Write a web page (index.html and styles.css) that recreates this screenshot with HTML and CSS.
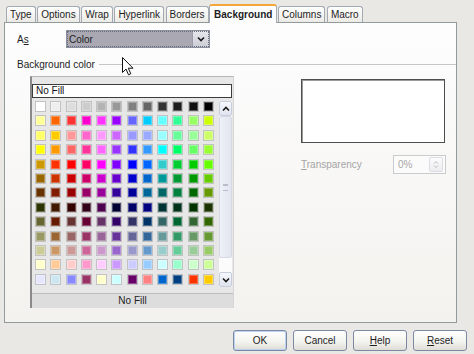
FILE: index.html
```html
<!DOCTYPE html>
<html lang="en">
<head>
    <meta charset="UTF-8">
    <title>Area - Background</title>
    <link rel="stylesheet" href="styles.css">
</head>
<body>
    <div class="tabs">
        <div class="tab">Type</div>
        <div class="tab">Options</div>
        <div class="tab">Wrap</div>
        <div class="tab">Hyperlink</div>
        <div class="tab">Borders</div>
        <div class="tab active">Background</div>
        <div class="tab">Columns</div>
        <div class="tab">Macro</div>
    </div>

    <div class="pane">
        <div class="as-row">
            <label>A<u>s</u></label>
            <div class="select">
                <span class="select-text">Color</span>
                <span class="select-btn">
                    <svg width="8" height="6" viewBox="0 0 8 6"><path d="M1 1.5 L4 4.5 L7 1.5" fill="none" stroke="#1a1a1a" stroke-width="1.6"/></svg>
                </span>
            </div>
        </div>

        <div class="section">
            <span>Background color</span>
            <div class="rule"></div>
        </div>

        <div class="content">
            <!-- colour table with its name field and status line -->
            <div class="colorbox">
                <div class="name-field">No Fill</div>
                <div class="set">
                    <div class="swatches" id="swatches"></div>
                    <div class="scroll">
                        <div class="sb-btn">
                            <svg width="8" height="6" viewBox="0 0 8 6"><path d="M1 4.5 L4 1.5 L7 4.5" fill="none" stroke="#1a1a1a" stroke-width="1.6"/></svg>
                        </div>
                        <div class="sb-thumb"><span class="grip"></span></div>
                        <div class="sb-track"></div>
                        <div class="sb-btn">
                            <svg width="8" height="6" viewBox="0 0 8 6"><path d="M1 1.5 L4 4.5 L7 1.5" fill="none" stroke="#1a1a1a" stroke-width="1.6"/></svg>
                        </div>
                    </div>
                </div>
                <div class="status">No Fill</div>
            </div>

            <div class="side">
                <div class="preview"></div>
                <div class="trans-row">
                    <span class="dim"><u>T</u>ransparency</span>
                    <div class="spin">
                        <span>0%</span>
                        <span class="spin-btn">
                            <svg width="6" height="9" viewBox="0 0 6 9"><path d="M1 3.5 L3 1.5 L5 3.5 M1 5.5 L3 7.5 L5 5.5" fill="none" stroke="#b8b8c0" stroke-width="1"/></svg>
                        </span>
                    </div>
                </div>
            </div>
        </div>
    </div>

    <div class="buttons">
        <div class="btn default">OK</div>
        <div class="btn">Cancel</div>
        <div class="btn"><u>H</u>elp</div>
        <div class="btn"><u>R</u>eset</div>
    </div>

    <!-- mouse pointer -->
    <svg class="cursor" width="13" height="19" viewBox="0 0 13 19">
        <path d="M0.5 0.5 L0.5 15.5 L4 12 L6.5 17.8 L8.8 16.8 L6.3 11.2 L11 11.2 Z" fill="#fff" stroke="#111" stroke-width="1" stroke-linejoin="round"/>
    </svg>

    <script>
        // standard palette, one row per line
        const palette = [
            "#ffffff #eeeeee #dddddd #cccccc #b3b3b3 #999999 #808080 #666666 #333333 #1c1c1c #111111 #000000",
            "#ffff99 #ff6600 #ff3333 #ff00cc #ff33ff #9900ff #6666ff #00ccff #66ffff #33ff99 #99ff66 #ccff00",
            "#ffff66 #ffcc00 #ff9999 #ff66cc #ff99ff #cc66ff #9999ff #99aaff #99ffff #66ff99 #99ff99 #ccff66",
            "#ffff00 #ff9900 #ff6666 #ff3399 #ff66ff #9933ff #3333ff #3399ff #00ffff #00ff66 #66ff66 #99ff33",
            "#cc9900 #ff3300 #ff0000 #ff0066 #ff00ff #8000ff #0000ff #0066ff #33cccc #00cc33 #00cc00 #66ff00",
            "#996600 #cc3300 #cc0000 #cc0066 #cc00cc #6600cc #0000cc #0066cc #009999 #009933 #009900 #66cc00",
            "#663300 #801a00 #990000 #990066 #990099 #330099 #000099 #006699 #006666 #007f3f #006600 #669900",
            "#2b3300 #401a00 #330000 #33001a #4d004d #000033 #000066 #000080 #003333 #00331a #003300 #1a3300",
            "#666633 #661a00 #663333 #660033 #663366 #330066 #333366 #003366 #336666 #006633 #336633 #336600",
            "#999966 #996633 #996666 #993366 #996699 #663399 #666699 #336699 #669999 #339966 #669966 #669933",
            "#cccc99 #cc9966 #cc9999 #cc6699 #cc99cc #9966cc #9999cc #6699cc #99cccc #66cc99 #99cc99 #99cc66",
            "#ffffcc #ffcc99 #ffcccc #ff99cc #ffccff #cc99ff #ccccff #99ccff #ccffff #99ffcc #ccffcc #ccff99",
            "#e6e6ff #cce6f2 #8888ff #993366 #ffffcc #ccffff #660066 #ff8080 #0066cc #004080 #ff3300 #ffcc00"
        ];
        const grid = document.getElementById("swatches");
        palette.forEach(function(row) {
            row.split(" ").forEach(function(color) {
                const cell = document.createElement("div");
                cell.className = "swatch";
                cell.style.background = color;
                grid.appendChild(cell);
            });
        });
    </script>
</body>
</html>
```

FILE: styles.css
```css
body {
    margin: 0;
    width: 474px;
    height: 354px;
    overflow: hidden;
    position: relative;
    background: #e9e8e5;
    font-family: "Liberation Sans", Arial, sans-serif;
    font-size: 10px;
    color: #1e1e1e;
}
/* Tab strip */
.tabs {
    display: flex;
    align-items: flex-end;
    gap: 1.5px;
    height: 18px;
    padding: 4px 0 0 6px;
    position: relative;
    z-index: 1;
}
.tab {
    height: 15px;
    line-height: 15px;
    padding: 0 3px;
    border: 1px solid #a2aab4;
    border-bottom: none;
    border-radius: 3px 3px 0 0;
    background: linear-gradient(#ffffff, #ebeae5);
}
.tab.active {
    height: 17px;
    line-height: 17px;
    padding: 0 4px;
    margin: 0 -1px -1px -1px;
    border-top: 2px solid #f3a738;
    background: #fdfdfe;
    font-weight: bold;
}
/* Tab page */
.pane {
    box-sizing: border-box;
    width: 453px;
    height: 301px;
    margin-left: 4px;
    padding: 7px 0 0 12px;
    border: 1px solid #919b9c;
    background: linear-gradient(#fdfdfe, #f3f2ee);
}
.as-row {
    display: flex;
    align-items: center;
    height: 18px;
}
.as-row label {
    width: 49px;
}
.select {
    box-sizing: border-box;
    width: 144px;
    height: 18px;
    display: flex;
    align-items: center;
    border: 1px solid #8a90a0;
    background: #a9a8b3;
    outline: 1px dotted #6c6c78;
    outline-offset: -2px;
}
.select-text {
    flex: 1;
    padding-left: 2px;
}
.select-btn {
    width: 16px;
    height: 16px;
    display: flex;
    align-items: center;
    justify-content: center;
    border-left: 1px solid #9c9cab;
    background: linear-gradient(#e6e6ec, #cdcdd6);
}
.section {
    display: flex;
    align-items: center;
    height: 13px;
    margin-top: 10px;
}
.section .rule {
    flex: 1;
    height: 1px;
    margin-left: 4px;
    background: #c6c6c6;
}
.content {
    display: flex;
    margin: 5px 0 0 13px;
}
/* Colour table */
.colorbox {
    box-sizing: border-box;
    width: 204px;
    border-top: 1px solid #b5b5b5;
    border-left: 2px solid #8a8a8a;
    border-right: 1px solid #d6d6d6;
    background: #e7e7e7;
}
.name-field {
    box-sizing: border-box;
    height: 14px;
    line-height: 12px;
    margin: 7px 1px 0 0;
    padding-left: 3px;
    border: 1px solid #3c3c3c;
    background: #fff;
    color: #111;
}
.set {
    display: flex;
    height: 192px;
    margin-top: 3px;
    padding-left: 3px;
}
.swatches {
    display: grid;
    grid-template-columns: repeat(12, 11px);
    grid-template-rows: repeat(13, 11px);
    column-gap: 4.27px;
    row-gap: 3.42px;
    align-content: start;
}
.swatch {
    box-sizing: border-box;
    border: 1px solid #c2c2c2;
    box-shadow: inset 0 0 0 1px rgba(255, 255, 255, 0.3);
}
.scroll {
    width: 13px;
    height: 186px;
    margin: 0 1px 0 auto;
    display: flex;
    flex-direction: column;
    background: #fbfbfb;
}
.sb-btn {
    box-sizing: border-box;
    height: 15px;
    display: flex;
    align-items: center;
    justify-content: center;
    border: 1px solid #c6cddc;
    border-radius: 2px;
    background: linear-gradient(#f7f8fc, #dfe3ee);
}
.sb-thumb {
    box-sizing: border-box;
    height: 142px;
    display: flex;
    align-items: center;
    justify-content: center;
    border: 1px solid #d6d9e4;
    border-radius: 2px;
    background: linear-gradient(90deg, #eef0f7, #e2e5ef);
}
.grip {
    width: 5px;
    height: 5px;
    border-top: 1px solid #b9bdcc;
    border-bottom: 1px solid #b9bdcc;
    box-shadow: inset 0 2px 0 -1px #b9bdcc;
}
.sb-track {
    flex: 1;
}
.status {
    height: 14px;
    line-height: 14px;
    text-align: center;
    border-top: 1px solid #bdbdbd;
    background: #dddddd;
}
/* Preview and transparency */
.side {
    margin: 3px 0 0 67px;
}
.preview {
    box-sizing: border-box;
    width: 144px;
    height: 64px;
    border: 1px solid #4e4e4e;
    box-shadow: inset 1px 1px 0 #9a9a9a;
    background: #fff;
}
.trans-row {
    display: flex;
    align-items: center;
    height: 19px;
    margin-top: 12px;
}
.dim {
    width: 92px;
    color: #a4a4a4;
}
.spin {
    box-sizing: border-box;
    width: 53px;
    height: 19px;
    display: flex;
    align-items: center;
    padding-left: 4px;
    border: 1px solid #cbcbcb;
    background: #fbfbfb;
    color: #a8a8a8;
}
.spin-btn {
    box-sizing: border-box;
    width: 14px;
    height: 15px;
    margin: 0 2px 0 auto;
    display: flex;
    align-items: center;
    justify-content: center;
    border: 1px solid #dcdce2;
    border-radius: 2px;
    background: linear-gradient(#fcfcfc, #ececf0);
}
/* Dialog buttons */
.buttons {
    display: flex;
    justify-content: flex-end;
    gap: 6px;
    margin-top: 7px;
    padding-right: 7px;
}
.btn {
    box-sizing: border-box;
    width: 54px;
    height: 21px;
    line-height: 19px;
    text-align: center;
    border: 1px solid #7b8aa2;
    border-radius: 3px;
    background: linear-gradient(#ffffff, #f2f2ee 60%, #dedcd5);
}
.btn.default {
    box-shadow: inset 0 0 0 1px #bcd0f2;
}
.cursor {
    position: absolute;
    left: 122px;
    top: 57px;
}
```
